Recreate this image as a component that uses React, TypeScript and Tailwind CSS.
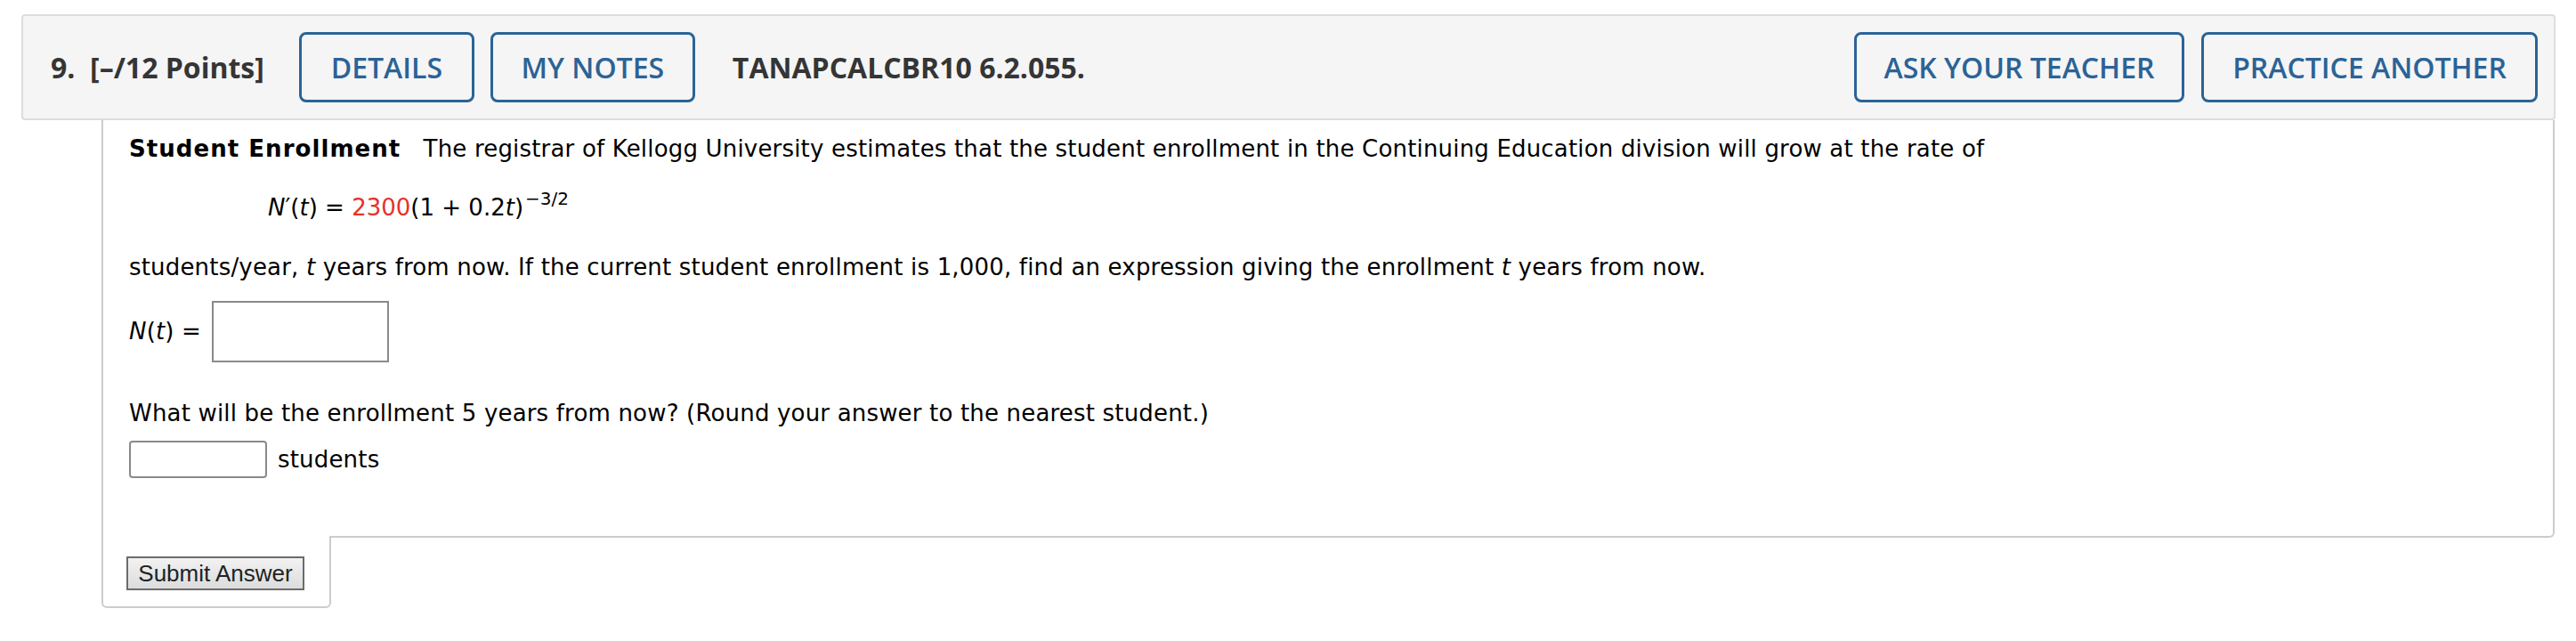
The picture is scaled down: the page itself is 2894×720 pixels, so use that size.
import React from "react";

const open = { fontFamily: '"Open Sans", "Noto Sans", sans-serif' };
const verd = { fontFamily: '"DejaVu Sans", Verdana, sans-serif' };

function HBtn({ label, w }: { label: string; w: string }) {
  return (
    <div
      className={`${w} h-[79px] shrink-0 flex items-center justify-center border-[3px] border-[#2b6396] rounded-[8px] text-[#2b6396] text-[32px] font-semibold`}
      style={open}
    >
      {label}
    </div>
  );
}

export default function App() {
  return (
    <div className="w-full h-[720px] bg-white">
      <div className="pt-[16px] pl-[24px] pr-[23px]">
        {/* header */}
        <div
          className="h-[119px] border-2 border-[#dddddd] bg-[#f5f5f5] rounded-[4px] flex items-center pl-[31px] pr-[18px]"
          style={open}
        >
          <div className="text-[32px] font-bold text-[#353535] whitespace-pre">9.  [–/12 Points]</div>
          <div className="flex gap-[18px] ml-[39px]">
            <HBtn label="DETAILS" w="w-[197px]" />
            <HBtn label="MY NOTES" w="w-[230px]" />
          </div>
          <div className="ml-[42px] text-[32px] font-bold text-[#353535]">TANAPCALCBR10 6.2.055.</div>
          <div className="ml-auto flex gap-[19px]">
            <HBtn label="ASK YOUR TEACHER" w="w-[371px]" />
            <HBtn label="PRACTICE ANOTHER" w="w-[378px]" />
          </div>
        </div>

        {/* content panel */}
        <div className="ml-[90px] mr-[1px]" style={verd}>
          <div className="border-x-2 border-b-2 border-[#cccccc] rounded-br-[6px] pl-[29px] pt-[14px] h-[469px] text-[26px] tracking-[0.18px] text-black">
            <div className="leading-[36px] whitespace-nowrap">
              <span className="font-bold tracking-[1.05px]">Student Enrollment</span>
              <span className="whitespace-pre">   </span>The registrar of Kellogg University estimates that the student enrollment in the Continuing Education division will grow at the rate of
            </div>
            <div className="leading-[36px] mt-[30px] pl-[156px] whitespace-nowrap tracking-normal">
              <i>N</i>′(<i>t</i>) = <span className="text-[#e8312a]">2300</span>(1 + 0.2<i>t</i>)<span className="relative top-[-12px] text-[20px] ml-[2px]">−3/2</span>
            </div>
            <div className="leading-[36px] mt-[29px] whitespace-nowrap">
              students/year, <i>t</i> years from now. If the current student enrollment is 1,000, find an expression giving the enrollment <i>t</i> years from now.
            </div>
            <div className="mt-[20px] flex items-center gap-[12px]">
              <span className="whitespace-nowrap">
                <i>N</i>(<i>t</i>) =
              </span>
              <div className="w-[199px] h-[69px] border-2 border-[#8a8a8a] bg-white" />
            </div>
            <div className="leading-[36px] mt-[39px] whitespace-nowrap">
              What will be the enrollment 5 years from now? (Round your answer to the nearest student.)
            </div>
            <div className="mt-[13px] flex items-center gap-[12px]">
              <div className="w-[155px] h-[42px] border-2 border-[#8a8a8a] rounded-[4px] bg-white" />
              <span>students</span>
            </div>
          </div>
          <div className="relative -mt-[2px] w-[258px] h-[81px] bg-white border-x-2 border-b-2 border-[#cccccc] rounded-b-[6px] pl-[26px] pt-[23px]">
            <div
              className="w-[200px] h-[38px] border-2 border-[#6b6b6b] bg-gradient-to-b from-[#f2f2f2] to-[#dcdcdc] flex items-center justify-center text-[26px] text-[#222]"
              style={{ fontFamily: '"Liberation Sans", Arial, sans-serif' }}
            >
              Submit Answer
            </div>
          </div>
        </div>
      </div>
    </div>
  );
}
